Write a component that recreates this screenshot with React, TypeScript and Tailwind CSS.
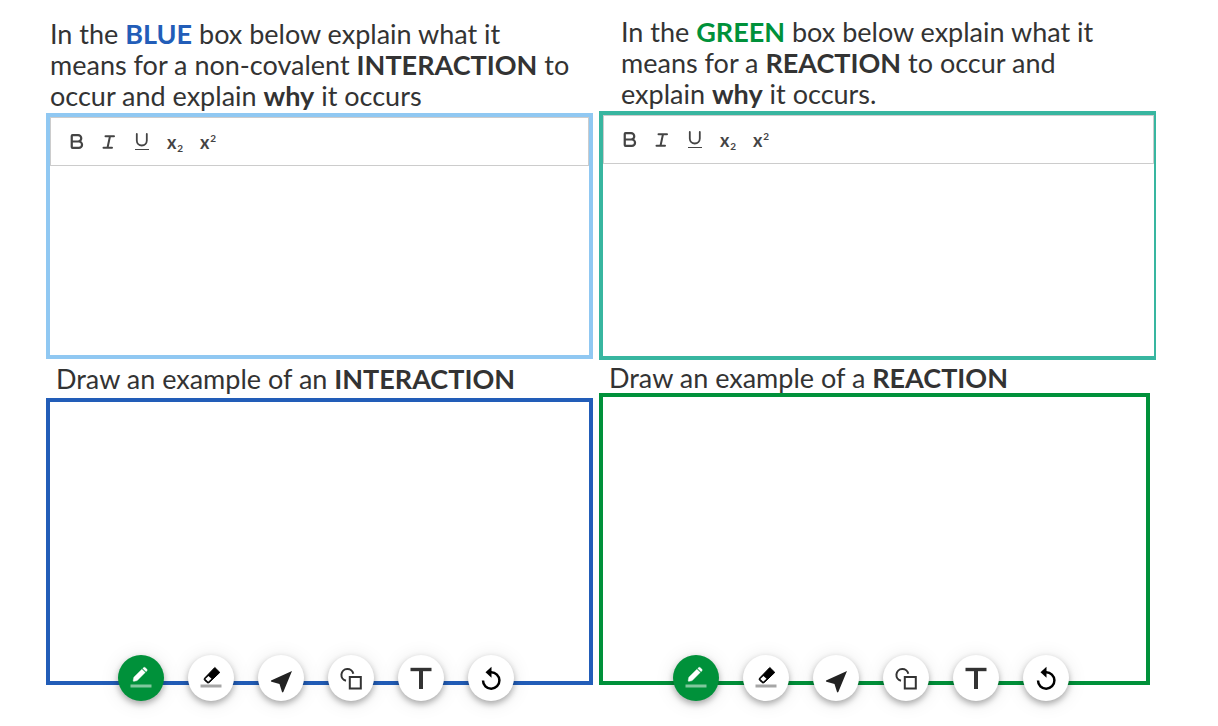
import { useState } from "react";
import type { ReactNode } from "react";
import { Bold } from "lucide-react";

function ItalicIcon() {
  return (
    <svg viewBox="0 0 20 20" className="h-5 w-5" fill="none" stroke="currentColor">
      <path d="M6.500 4.200h8.500M4.500 15.800h8.500M11 4.200 8.500 15.800" strokeWidth="2" strokeLinecap="round" />
    </svg>
  );
}

function UnderlineIcon() {
  return (
    <svg viewBox="0 0 20 20" className="h-5 w-5" fill="none" stroke="currentColor">
      <path d="M4.800 2v6.500a5 5 0 0 0 10 0V2" strokeWidth="1.800" strokeLinecap="round" />
      <path d="M3 17.500h14" strokeWidth="1" />
    </svg>
  );
}

const formats = [
  { label: "Bold", icon: <Bold size={19} strokeWidth={2.8} /> },
  { label: "Italic", icon: <ItalicIcon /> },
  { label: "Underline", icon: <UnderlineIcon /> },
  {
    label: "Subscript",
    icon: (
      <span className="flex items-center gap-px">
        x<span className="pt-3 text-[10px] leading-none">2</span>
      </span>
    ),
  },
  {
    label: "Superscript",
    icon: (
      <span className="flex items-center gap-px">
        x<span className="pb-2 text-[10px] leading-none">2</span>
      </span>
    ),
  },
];

const tools = [
  {
    label: "Pencil",
    icon: (
      <svg viewBox="0 0 24 24" className="h-6 w-6">
        <path
          d="M4.200 14.400 4.800 11.300 12.900 3.300 16.200 6.500 8.200 14.600 5.200 15.300Q3.900 15.500 4.200 14.400ZM13.800 2.400 14.700 1.600Q15.500 1 16.300 1.700L17.900 3.200Q18.600 4 17.900 4.800L17.100 5.700Z"
          fill="white"
          stroke="white"
          strokeWidth="0.400"
        />
        <path d="M1.500 18.500h21v3h-21z" fill="white" fillOpacity="0.5" />
      </svg>
    ),
  },
  {
    label: "Eraser",
    icon: (
      <svg viewBox="0 0 24 24" className="h-6 w-6">
        <path
          d="M15.800 1.500 20.800 6.400 10.200 16.600Q9 17.500 7.900 16.500L5.600 14.200Q4.600 13.200 5.600 12.100Z"
          fill="black"
          stroke="black"
          strokeLinejoin="round"
        />
        <path d="M9.500 9.900 12.500 12.700 9.200 15.700 6.300 13Z" fill="white" />
        <path d="M1.500 18.500h21v3h-21z" fill="#a6a6a6" />
      </svg>
    ),
  },
  {
    label: "Select",
    icon: (
      <svg viewBox="0 0 24 24" className="h-6 w-6 overflow-visible">
        <path d="M23 5 2 14.500Q1.600 15.300 2.500 15.700L10.500 18 13 26Q13.700 26.800 14.300 26Z" fill="#222" />
      </svg>
    ),
  },
  {
    label: "Shapes",
    icon: (
      <svg viewBox="0 0 24 24" className="h-6 w-6" fill="none" stroke="#333" strokeWidth="2">
        <path d="M7 14.800A6 6 0 1 1 14.300 7.800" />
        <path d="M10.800 11h11v11.500h-11z" />
      </svg>
    ),
  },
  {
    label: "Text",
    icon: (
      <svg viewBox="0 0 24 24" className="h-6 w-6" fill="none" stroke="#333">
        <path d="M1.500 3.500h21" strokeWidth="3.400" />
        <path d="M12 3.500v19.500" strokeWidth="4" />
      </svg>
    ),
  },
  {
    label: "Undo",
    icon: (
      <svg viewBox="0 0 24 24" className="h-6 w-6">
        <path
          d="M4 14.500A8.200 8.200 0 1 0 12 6.300"
          fill="none"
          stroke="black"
          strokeWidth="2.500"
        />
        <path d="M12.500 0.800v11L6.500 6.300Z" fill="black" />
      </svg>
    ),
  },
];

function Editor({ id, label, className }: { id: string; label: string; className: string }) {
  return (
    <div className={`flex flex-col ${className}`}>
      <div className="flex h-[49px] items-center gap-[13px] border border-[#ccc] pl-[15px] text-[#444]">
        {formats.map((f) => (
          <button
            key={f.label}
            type="button"
            aria-label={f.label}
            className="flex h-5 w-5 items-center justify-center text-lg leading-5 font-bold"
          >
            {f.icon}
          </button>
        ))}
      </div>
      <textarea id={id} aria-label={label} className="w-full flex-1 resize-none p-3 text-lg outline-none" />
    </div>
  );
}

function DrawTools({ className }: { className: string }) {
  const [active, setActive] = useState("Pencil");

  return (
    <div className={`absolute top-full -mt-[26px] flex gap-6 ${className}`}>
      {tools.map((tool) => (
        <button
          key={tool.label}
          type="button"
          aria-label={tool.label}
          aria-pressed={active === tool.label}
          onClick={() => setActive(tool.label)}
          className={`flex h-[46px] w-[46px] items-center justify-center rounded-full shadow-[0_3px_6px_rgba(0,0,0,0.3),0_2px_20px_rgba(0,0,0,0.1)] ${
            tool.label === "Pencil" ? "bg-[#00913a]" : "bg-white"
          }`}
        >
          {tool.icon}
        </button>
      ))}
    </div>
  );
}

function Prompt({ className, children }: { className: string; children: ReactNode }) {
  return <p className={`text-[27px] leading-[31px] whitespace-nowrap ${className}`}>{children}</p>;
}

export default function App() {
  return (
    <main className="grid min-h-screen grid-cols-[547fr_557fr] items-start gap-[6px] bg-white pr-[62px] pl-[46px] font-['Lato',sans-serif] text-[#333]">
      <section>
        <Prompt className="pt-[18px] pb-[2px] pl-1">
          In the <b className="text-[#225db8]">BLUE</b> box below explain what it
          <br />
          means for a non-covalent <b>INTERACTION</b> to
          <br />
          occur and explain <b>why</b> it occurs
        </Prompt>
        <Editor id="interaction" label="Explain an interaction" className="h-[246px] border-4 border-[#90c8f2]" />
        <Prompt className="pt-1 pb-1 pl-[10px]">
          Draw an example of an <b>INTERACTION</b>
        </Prompt>
        <div className="relative h-[287px] border-4 border-[#225db8]">
          <DrawTools className="left-[68px]" />
        </div>
      </section>

      <section>
        <Prompt className="pt-4 pb-[2px] pl-[22px]">
          In the <b className="text-[#00913a]">GREEN</b> box below explain what it
          <br />
          means for a <b>REACTION</b> to occur and
          <br />
          explain <b>why</b> it occurs.
        </Prompt>
        <Editor
          id="reaction"
          label="Explain a reaction"
          className="h-[249px] border-4 border-r-2 border-[#38b6a0]"
        />
        <Prompt className="pt-[2px] pl-[10px]">
          Draw an example of a <b>REACTION</b>
        </Prompt>
        <div className="relative mr-[6px] h-[292px] border-4 border-[#00913a]">
          <DrawTools className="left-[70px]" />
        </div>
      </section>
    </main>
  );
}
